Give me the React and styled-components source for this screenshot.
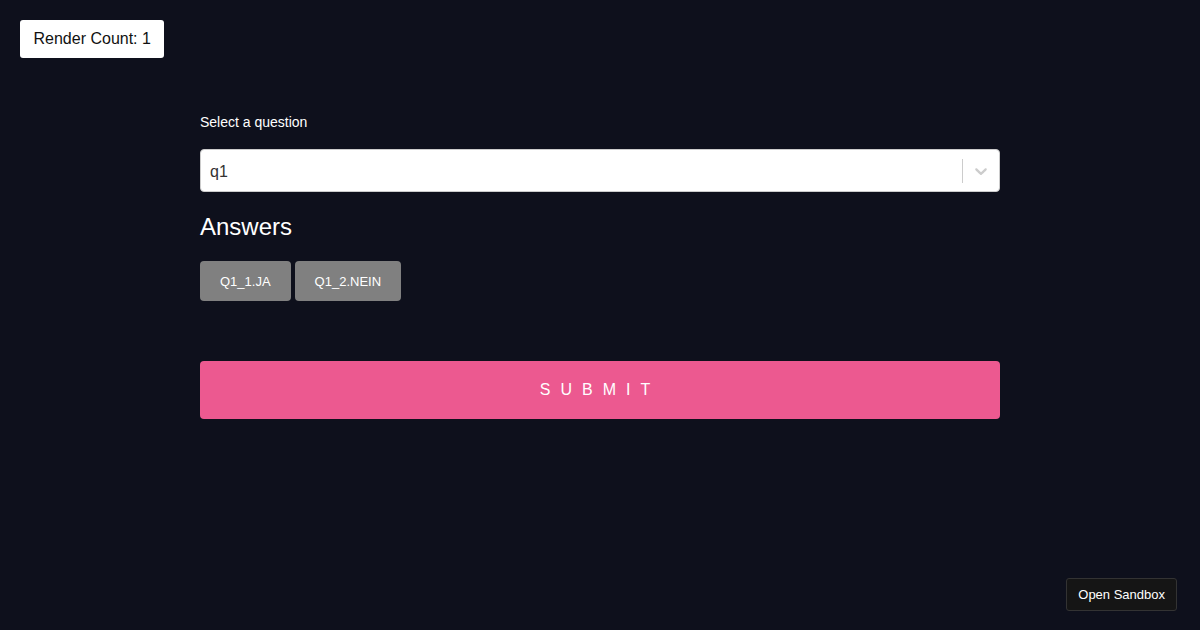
import React, { useState } from "react";
import styled, { createGlobalStyle } from "styled-components";

const GlobalStyle = createGlobalStyle`
  html, body {
    margin: 0;
    padding: 0;
    background: #0e101c;
    font-family: "Liberation Sans", Arial, sans-serif;
    color: #ffffff;
  }
  * { box-sizing: border-box; }
`;

const questions = [
  { id: "q1", answers: ["Q1_1.JA", "Q1_2.NEIN"] },
  { id: "q2", answers: ["Q2_1.JA", "Q2_2.NEIN"] },
];

function App() {
  const [question] = useState(questions[0]);

  return (
    <>
      <GlobalStyle />
      <Page>
        <RenderCount>Render Count: 1</RenderCount>
        <Form onSubmit={(e) => e.preventDefault()}>
          <Label>Select a question</Label>
          <Select>
            <Value>{question.id}</Value>
            <Indicators>
              <Separator />
              <Chevron>
                <svg width="20" height="20" viewBox="0 0 20 20" fill="#cccccc">
                  <path d="M4.516 7.548c0.436-0.446 1.043-0.481 1.576 0l3.908 3.747 3.908-3.747c0.533-0.481 1.141-0.446 1.574 0 0.436 0.445 0.408 1.197 0 1.615-0.406 0.418-4.695 4.502-4.695 4.502-0.217 0.223-0.502 0.335-0.787 0.335s-0.57-0.112-0.789-0.335c0 0-4.287-4.084-4.695-4.502s-0.436-1.170 0-1.615z" />
                </svg>
              </Chevron>
            </Indicators>
          </Select>
          <Heading>Answers</Heading>
          <AnswerRow>
            {question.answers.map((a) => (
              <AnswerButton key={a} type="button">
                {a}
              </AnswerButton>
            ))}
          </AnswerRow>
          <Submit type="submit">SUBMIT</Submit>
        </Form>
        <SandboxButton>Open Sandbox</SandboxButton>
      </Page>
    </>
  );
}

const Page = styled.div`
  position: relative;
  width: 1200px;
  height: 630px;
  background: #0e101c;
  overflow: hidden;
`;

const RenderCount = styled.div`
  position: absolute;
  top: 20px;
  left: 20px;
  background: #ffffff;
  color: #111111;
  border-radius: 3px;
  padding: 0 13.5px;
  height: 38px;
  line-height: 38px;
  font-size: 16px;
`;

const Form = styled.form`
  width: 800px;
  margin: 0 auto;
  padding-top: 113px;
  display: flex;
  flex-direction: column;
`;

const Label = styled.label`
  font-size: 14px;
  line-height: 18px;
  color: #ffffff;
  margin-bottom: 18px;
`;

const Select = styled.div`
  display: flex;
  align-items: center;
  height: 43px;
  background: #ffffff;
  border: 1px solid #cccccc;
  border-radius: 4px;
`;

const Value = styled.div`
  flex: 1;
  padding: 2px 0 0 9px;
  font-size: 16px;
  color: #333333;
`;

const Indicators = styled.div`
  display: flex;
  align-items: center;
  height: 100%;
`;

const Separator = styled.span`
  width: 1px;
  height: 24px;
  background: #cccccc;
`;

const Chevron = styled.div`
  display: flex;
  padding: 0 8px;
`;

const Heading = styled.h2`
  margin: 20px 0 0;
  font-size: 24px;
  font-weight: 400;
  line-height: 30px;
`;

const AnswerRow = styled.div`
  display: flex;
  gap: 4px;
  margin-top: 19px;
`;

const AnswerButton = styled.button`
  height: 40px;
  padding: 0 20px;
  background: #808080;
  color: #ffffff;
  border: none;
  border-radius: 4px;
  font-family: "Liberation Sans", Arial, sans-serif;
  font-size: 13px;
`;

const Submit = styled.button`
  margin-top: 60px;
  height: 58px;
  background: #ec5990;
  color: #ffffff;
  border: none;
  border-radius: 4px;
  font-family: "Liberation Sans", Arial, sans-serif;
  font-size: 16px;
  letter-spacing: 10px;
`;

const SandboxButton = styled.button`
  position: absolute;
  right: 23px;
  bottom: 19px;
  height: 33px;
  padding: 0 11px;
  background: #151515;
  color: #ffffff;
  border: 1px solid #333333;
  border-radius: 3px;
  font-family: "Liberation Sans", Arial, sans-serif;
  font-size: 13px;
`;

export default App;
